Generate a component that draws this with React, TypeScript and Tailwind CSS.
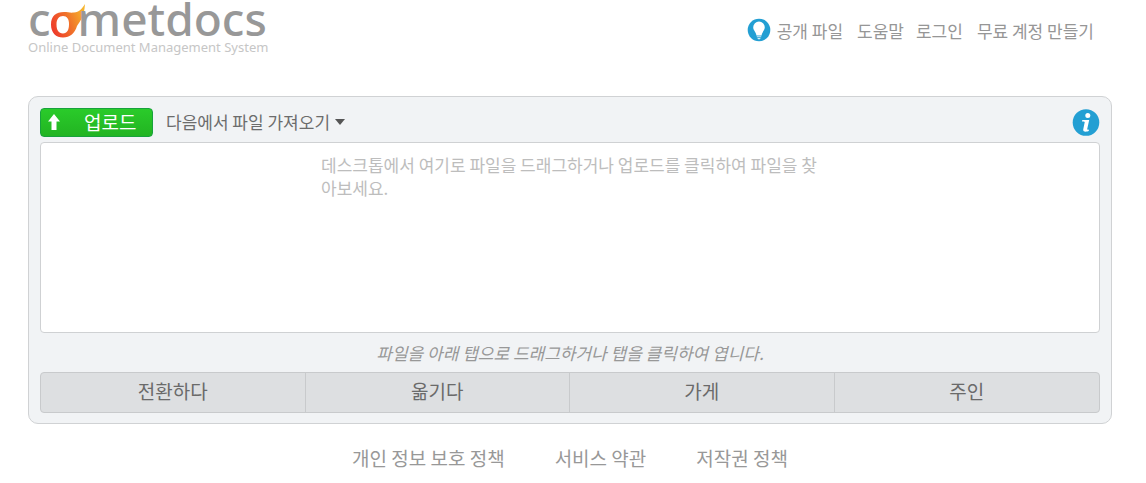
const tabs = ['전환하다', '옮기다', '가게', '주인'];

const footerLinks = ['개인 정보 보호 정책', '서비스 약관', '저작권 정책'];

const Logo = () => (
  <a href="#" className="block font-['Noto_Sans','Open_Sans',sans-serif]">
    <span className="flex h-[39px] items-start text-[46px] font-medium leading-9 text-[#989898]">
      <span>c</span>
      <svg viewBox="0 0 36 40" className="-ml-px -mr-2 h-10 w-9 shrink-0" role="img" aria-label="o">
        <defs>
          <linearGradient id="comet" x1="0" y1="0.7" x2="1" y2="0.3">
            <stop offset="0" stopColor="#ee3a2b" />
            <stop offset="0.5" stopColor="#f0702a" />
            <stop offset="1" stopColor="#f6b42c" />
          </linearGradient>
        </defs>
        <path
          fill="url(#comet)"
          fillRule="evenodd"
          d="M35 4C34 18 30 21 27 26C25 33 20 37.500 13 37.500C6 37.500 1 33 1 24.500C1 16 6 12 14 12C18 12 20 13 24 12.500C29 12 32 9 35 4ZM13 16C17 16 19 19 19 24C19 30 17 33.500 13 33.500C8.500 33.500 6.500 30 6.500 24.500C6.500 19 9 16 13 16Z"
        />
      </svg>
      <span>metdocs</span>
    </span>
    <span className="block text-[13px] leading-4 text-[#c6c6c6]">Online Document Management System</span>
  </a>
);

const BulbIcon = () => (
  <svg viewBox="0 0 24 24" className="mr-[6px] size-6" aria-hidden="true">
    <circle cx="12" cy="12" r="11.300" fill="#239fd3" />
    <path fill="#fff" d="M12 3.500a5.800 5.800 0 0 0-5.800 5.800c0 3.300 2.900 4.700 3.200 8.200h5.200c.3-3.500 3.200-4.900 3.200-8.200A5.800 5.800 0 0 0 12 3.500Z" />
    <path fill="#d4edf7" d="M9.800 18.200h4.400v1.100H9.800zM10.300 19.900h3.400l-.8 1.300h-1.800z" />
  </svg>
);

const InfoIcon = () => (
  <svg viewBox="0 0 28 28" className="size-7" aria-hidden="true">
    <circle cx="14" cy="13.500" r="13.300" fill="#239fd3" />
    <circle cx="15.800" cy="6.500" r="2.500" fill="#fff" />
    <path fill="#fff" d="M10.300 10.900h6.900l-2 9.100c-.1.700.5.900 1.900.5l-.4 1.600c-1.600.8-5.900 1.400-5.500-1.500l1.500-7.300c.1-.7-.5-1-2.700-.9z" />
  </svg>
);

const App = () => {
  return (
    <div className="min-h-screen bg-white pl-7 pr-[34px] font-['Noto_Sans_CJK_KR',sans-serif] text-[17px] leading-[23px]">
      <header className="flex h-24 items-start justify-between">
        <Logo />
        <nav className="flex items-center pr-[18px] pt-[18px] text-[#969696]">
          <a href="#" className="mr-[14px] flex items-center">
            <BulbIcon />
            공개 파일
          </a>
          <a href="#" className="mr-3">도움말</a>
          <a href="#" className="mr-[14px]">로그인</a>
          <a href="#">무료 계정 만들기</a>
        </nav>
      </header>

      <main className="rounded-[10px] border border-[#d0d2d4] bg-[#f1f3f5] p-[11px] pb-[10px]">
        <div className="mb-[5px] flex items-center">
          <button className="flex h-[29px] w-[113px] items-center rounded border border-[#17a23c] bg-linear-to-b from-[#2acb2a] to-[#22b422] pb-[3px] pl-[6px] text-[19px] text-white">
            <svg viewBox="0 0 14 18" className="mr-[23px] h-[18px] w-[14px]" aria-hidden="true">
              <path fill="#fff" d="M7 2l6 7.500H9.500V18h-5V9.500H1z" />
            </svg>
            업로드
          </button>
          <button className="ml-[13px] flex items-center pb-[2px] text-[#6c6c6c]">
            다음에서 파일 가져오기
            <svg viewBox="0 0 12 6" className="ml-1 h-[6px] w-3" aria-hidden="true">
              <path fill="#555" d="M1 0h10L6 6z" />
            </svg>
          </button>
          <button className="ml-auto" aria-label="정보">
            <InfoIcon />
          </button>
        </div>

        <section className="h-[191px] rounded border border-[#cfd1d3] bg-white pt-[10px]">
          <p className="mx-auto max-w-[498px] text-[#bdbdbd]">
            데스크톱에서 여기로 파일을 드래그하거나 업로드를 클릭하여 파일을 찾아보세요.
          </p>
        </section>

        <p className="py-2 text-center italic text-[#989898]">파일을 아래 탭으로 드래그하거나 탭을 클릭하여 엽니다.</p>

        <div className="grid grid-cols-4 divide-x divide-[#c8cacc] overflow-hidden rounded border border-[#c8cacc] bg-[#dddfe1]">
          {tabs.map((tab) => (
            <button key={tab} className="h-[39px] pb-1 text-[19px] text-[#6a6a6a]">
              {tab}
            </button>
          ))}
        </div>
      </main>

      <footer className="flex justify-center gap-[50px] pt-[22px] text-[19px] text-[#989898]">
        {footerLinks.map((link) => (
          <a key={link} href="#">
            {link}
          </a>
        ))}
      </footer>
    </div>
  );
};

export default App;
